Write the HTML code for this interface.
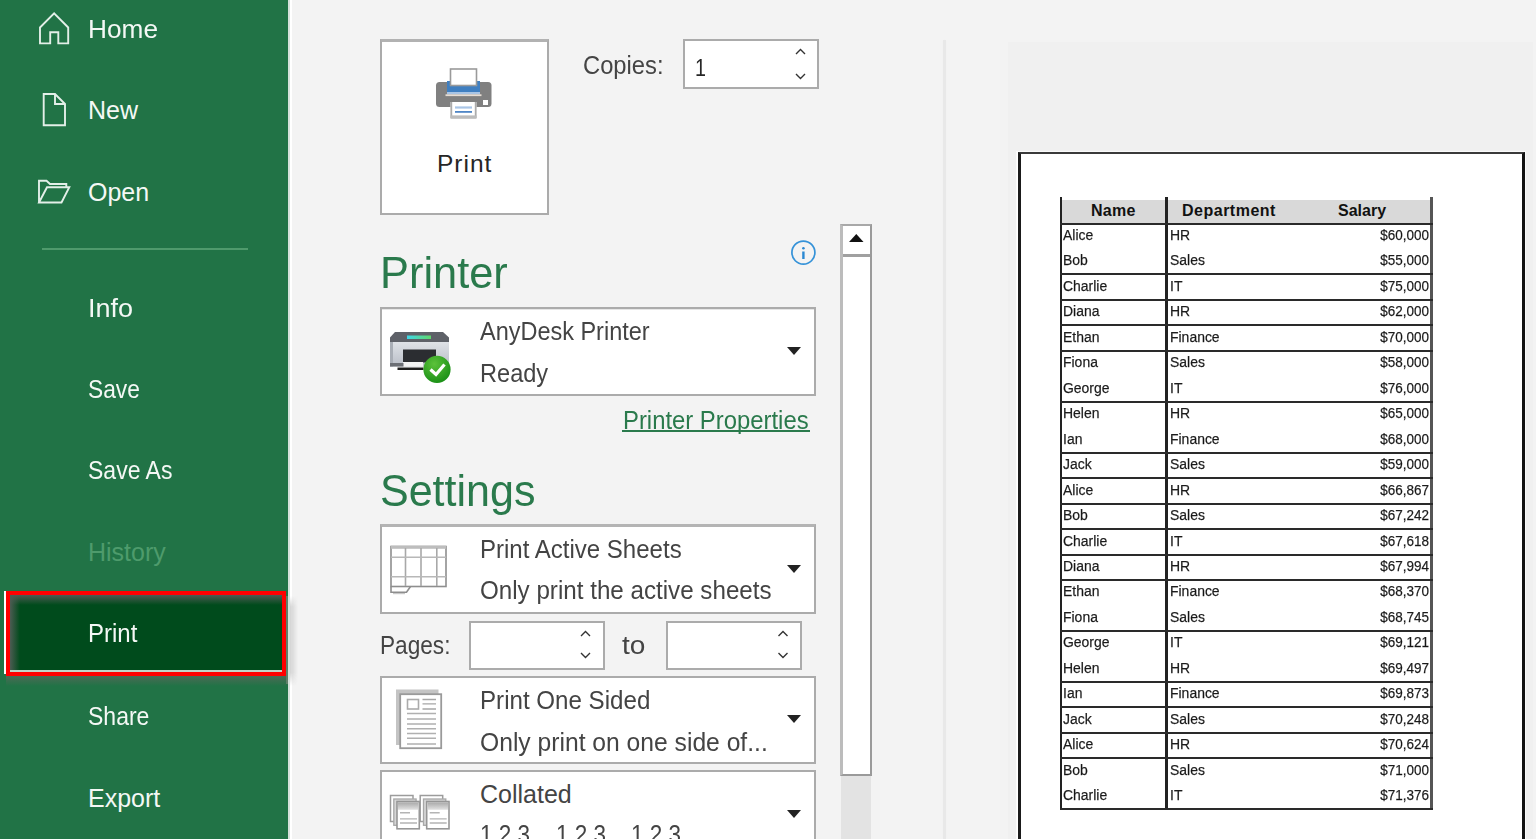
<!DOCTYPE html>
<html><head><meta charset="utf-8">
<style>
html,body{margin:0;padding:0;}
body{width:1536px;height:839px;overflow:hidden;position:relative;background:#f3f3f3;font-family:"Liberation Sans",sans-serif;}
.a{position:absolute;}
.t{position:absolute;white-space:nowrap;line-height:1;transform-origin:0 0;}
.si{color:#f4f8f5;font-size:25px;left:88px;}
.box{position:absolute;background:#fff;border:2px solid #ababab;box-sizing:border-box;}
.dd{color:#444;font-size:25px;}
.arr{position:absolute;width:0;height:0;border-left:7px solid transparent;border-right:7px solid transparent;border-top:8px solid #222;}
.head{color:#2a7a4c;font-size:45px;}
.pt{position:absolute;white-space:nowrap;line-height:1;font-family:"Liberation Sans",sans-serif;font-size:15.5px;color:#151515;-webkit-text-stroke:0.25px #333;transform:scaleX(0.9);transform-origin:0 0;}
.pr{transform-origin:100% 0;}
.ph{position:absolute;white-space:nowrap;line-height:1;font-weight:bold;font-size:16px;color:#111;}
svg{position:absolute;overflow:visible;}
</style></head>
<body>
<div class="a" style="left:0;top:0;width:288px;height:839px;background:#217346"></div>
<div class="t si" style="top:17px;transform:scaleX(1.05)">Home</div>
<div class="t si" style="top:98px">New</div>
<div class="t si" style="top:180px">Open</div>
<div class="a" style="left:42px;top:248px;width:206px;height:2px;background:#4f9a6c"></div>
<div class="t si" style="top:296px;transform:scaleX(1.08)">Info</div>
<div class="t si" style="top:377px;transform:scaleX(0.91)">Save</div>
<div class="t si" style="top:458px;transform:scaleX(0.92)">Save As</div>
<div class="t si" style="top:540px;color:#4e9b6c">History</div>
<div class="t si" style="top:704px;transform:scaleX(0.92)">Share</div>
<div class="t si" style="top:786px">Export</div>
<!-- sidebar icons -->
<svg style="left:0;top:0" width="288" height="260" fill="none" stroke="#e3efe8" stroke-width="1.9" stroke-linejoin="miter">
  <path d="M40,27.5 L54.1,13.3 L68.2,27.5 V43.4 H58.3 V32.2 H50.2 V43.4 H40 Z"/>
  <path d="M43.7,94 H55 L65,104 V125.3 H43.7 Z M55,94 V104 H65"/>
  <path d="M39,202.5 V180.8 H46.5 L50,184 H66.3 V187.2 M39,202.5 L47,187.2 H69.3 L61.5,202.5 Z"/>
</svg>
<!-- selected print -->
<div class="a" style="left:6px;top:676px;width:282px;height:10px;background:linear-gradient(#4c6a55,#217346)"></div>
<div class="a" style="left:6px;top:591px;width:280px;height:85px;background:#ff0000"></div>
<div class="a" style="left:10px;top:595px;width:272px;height:77px;background:#004b1c"></div>
<div class="a" style="left:10px;top:595px;width:272px;height:10px;background:linear-gradient(#4d5b52,#004b1c)"></div>
<div class="a" style="left:10px;top:595px;width:10px;height:76px;background:linear-gradient(90deg,#4d5b52,rgba(0,75,28,0))"></div>
<div class="a" style="left:10px;top:670px;width:272px;height:2px;background:#c2d3c7"></div>
<div class="a" style="left:4px;top:591px;width:2px;height:83px;background:#fff"></div>
<div class="a" style="left:286px;top:596px;width:2px;height:88px;background:#5f8069"></div>
<div class="t si" style="top:621px;transform:scaleX(0.96)">Print</div>
<div class="a" style="left:288px;top:0;width:2px;height:839px;background:#d6e1db"></div><div class="a" style="left:290px;top:0;width:2px;height:839px;background:#fff"></div><div class="a" style="left:290px;top:596px;width:8px;height:90px;background:linear-gradient(90deg,rgba(200,200,200,0.8),rgba(243,243,243,0));-webkit-mask-image:linear-gradient(rgba(0,0,0,0),#000 12%,#000 85%,rgba(0,0,0,0))"></div>
<!-- print button -->
<div class="box" style="left:380px;top:38.5px;width:169px;height:176.5px;border-top:3px solid #b2b2b2"></div>
<svg style="left:0;top:0" width="10" height="10">
  <rect x="436" y="82" width="55.5" height="25" rx="3.5" fill="#808080"/>
  <rect x="447" y="81" width="33" height="11" fill="#3f7fc1"/>
  <rect x="447" y="92" width="33" height="2.4" fill="#a8c4e4"/>
  <rect x="445.5" y="94.3" width="36" height="1.8" fill="#e6ddd4"/>
  <rect x="450.5" y="69" width="26" height="16.5" fill="#fff" stroke="#9a9a9a" stroke-width="1.6"/>
  <rect x="450.5" y="102" width="26" height="16.8" fill="#fff"/>
  <path d="M451.3,102 V118 M475.7,102 V118" stroke="#ababab" stroke-width="1.8"/>
  <rect x="450.5" y="115.4" width="26" height="3.4" fill="#bcbcbc"/>
  <rect x="455" y="106.4" width="17" height="2.2" fill="#a9c5e6"/>
  <rect x="455" y="111" width="17" height="1.8" fill="#4f86c6"/>
  <rect x="483" y="100" width="5" height="5" fill="#fff"/>
</svg>
<div class="t dd" style="left:437px;top:151.5px;font-size:24.5px;letter-spacing:1px;color:#262626">Print</div>

<div class="t dd" style="left:583px;top:53px;color:#444;transform:scaleX(0.95)">Copies:</div>
<div class="box" style="left:683px;top:39px;width:136px;height:50px"></div>
<div class="t dd" style="left:695px;top:55.5px;font-size:24px;color:#262626;transform:scaleX(0.82)">1</div>

<div class="a" style="left:943px;top:40px;width:3px;height:799px;background:#e8e8e8;box-shadow:0 0 1px #ececec"></div>
<div class="a" style="left:1008px;top:42px;width:525px;height:797px;background:#f0f0f0"></div>

<div class="t head" style="left:380px;top:250px;transform:scaleX(0.964)">Printer</div>
<div class="box" style="left:380px;top:307px;width:436px;height:89px;box-shadow:inset 0 1px 0 #e6e6e6"></div>
<div class="t dd" style="left:480px;top:319px;transform:scaleX(0.939)">AnyDesk Printer</div>
<div class="t dd" style="left:480px;top:360.5px;transform:scaleX(0.943)">Ready</div>
<div class="arr" style="left:787px;top:346.5px"></div>
<div class="t" style="left:623px;top:408px;font-size:25px;color:#2a7a4c;transform:scaleX(0.954)">Printer Properties</div><div class="a" style="left:622px;top:429.8px;width:188px;height:1.8px;background:#2a7a4c"></div>

<div class="t head" style="left:380px;top:468px;transform:scaleX(0.956)">Settings</div>
<div class="box" style="left:380px;top:524px;width:436px;height:90px;border-top:3px solid #b4b4b4"></div>
<div class="t dd" style="left:480px;top:537px;transform:scaleX(0.961)">Print Active Sheets</div>
<div class="t dd" style="left:480px;top:578px;transform:scaleX(0.967)">Only print the active sheets</div>
<div class="arr" style="left:787px;top:565px"></div>

<div class="t dd" style="left:380px;top:633px;transform:scaleX(0.905)">Pages:</div>
<div class="box" style="left:469px;top:621px;width:136px;height:49px"></div>
<div class="t dd" style="left:622px;top:633px;transform:scaleX(1.12)">to</div>
<div class="box" style="left:666px;top:621px;width:136px;height:49px"></div>

<div class="box" style="left:380px;top:676px;width:436px;height:88px"></div>
<div class="t dd" style="left:480px;top:688px;transform:scaleX(0.965)">Print One Sided</div>
<div class="t dd" style="left:480px;top:729.5px;transform:scaleX(0.986)">Only print on one side of...</div>
<div class="arr" style="left:787px;top:715px"></div>

<div class="box" style="left:380px;top:770px;width:436px;height:100px"></div>
<div class="t dd" style="left:480px;top:782px">Collated</div>
<div class="t dd" style="left:480px;top:822px;transform:scaleX(0.9)">1,2,3</div><div class="t dd" style="left:556px;top:822px;transform:scaleX(0.9)">1,2,3</div><div class="t dd" style="left:631px;top:822px;transform:scaleX(0.9)">1,2,3</div>
<div class="arr" style="left:787px;top:809.5px"></div>

<!-- spinner carets, info icon -->
<svg style="left:0;top:0" width="10" height="10" fill="none" stroke="#333" stroke-width="1.6">
  <path d="M796,54 L800.5,49.5 L805,54 M796,74 L800.5,78.5 L805,74" stroke-width="1.4"/>
  <path d="M581,636 L585.5,631.5 L590,636 M581,653 L585.5,657.5 L590,653" stroke-width="1.4"/>
  <path d="M778.5,636 L783,631.5 L787.5,636 M778.5,653 L783,657.5 L787.5,653" stroke-width="1.4"/>
  <circle cx="803.4" cy="252.6" r="11.5" stroke="#3592d8" stroke-width="1.7"/>
  <path d="M803.4,251.5 V259" stroke="#2a88d2" stroke-width="2.4"/>
  <circle cx="803.4" cy="248.2" r="1.3" fill="#2a88d2" stroke="none"/>
</svg>

<!-- scrollbar -->
<div class="a" style="left:841px;top:775px;width:30px;height:64px;background:#e3e3e3"></div>
<div class="a" style="left:840px;top:224px;width:32px;height:552px;background:#fff;border-left:3px solid #bcbcbc;border-top:2px solid #a8a8a8;border-right:2px solid #9a9a9a;border-bottom:2px solid #9a9a9a;box-sizing:border-box"></div>
<div class="a" style="left:843px;top:254px;width:27px;height:3px;background:#a0a0a0"></div>
<svg style="left:0;top:0" width="10" height="10"><path d="M849,242 L856.3,234 L863.5,242 Z" fill="#111"/></svg>

<!-- preview page -->
<div class="a" style="left:1016px;top:151px;width:510px;height:700px;background:#fff;border:1px solid #fafafa;box-sizing:border-box"></div><div class="a" style="left:1018px;top:152px;width:507px;height:700px;background:#fff;border-top:2px solid #3a3a3a;border-left:3px solid #1a1a1a;border-right:3px solid #111;box-sizing:border-box"></div>
<div class="a" style="left:1060px;top:200px;width:373px;height:23px;background:#d9d9d9"></div>
<div class="ph" style="left:1091px;top:203px;letter-spacing:0.3px">Name</div>
<div class="ph" style="left:1182px;top:203px;letter-spacing:0.5px">Department</div>
<div class="ph" style="left:1338px;top:203px;letter-spacing:0px">Salary</div>
<div class="a" style="left:1060px;top:197px;width:2px;height:612px;background:#222"></div>
<div class="a" style="left:1165px;top:197px;width:3px;height:612px;background:#222"></div>
<div class="a" style="left:1430px;top:197px;width:3px;height:612px;background:#555"></div>
<div class="a" style="left:1060px;top:222.5px;width:373px;height:2px;background:#2a2a2a"></div>
<!-- printer w check -->
<svg style="left:0;top:0" width="10" height="10">
  <defs>
    <linearGradient id="cy" x1="0" x2="1"><stop offset="0" stop-color="#3fd6e8"/><stop offset="1" stop-color="#5fd86a"/></linearGradient>
    <linearGradient id="bd" x1="0" y1="0" x2="0" y2="1"><stop offset="0" stop-color="#dfe2e7"/><stop offset="1" stop-color="#b9bec7"/></linearGradient>
    <radialGradient id="gc" cx="0.4" cy="0.3" r="0.8"><stop offset="0" stop-color="#5cc23a"/><stop offset="1" stop-color="#138a12"/></radialGradient>
  </defs>
  <path d="M395,332 H443 L449,337.5 V342 H390 V337.5 Z" fill="#5e6168"/>
  <rect x="407" y="335.5" width="24" height="3.5" fill="url(#cy)"/>
  <rect x="390" y="342" width="59" height="24.5" fill="url(#bd)"/>
  <rect x="390" y="342" width="3" height="24.5" fill="#a9aeb6"/>
  <rect x="403" y="349.5" width="33" height="13" fill="#2b2d31"/>
  <rect x="403" y="362" width="20" height="4.5" fill="#f3f3f3"/>
  <rect x="390" y="363" width="13.5" height="3.5" fill="#6c6f75"/>
  <rect x="397.5" y="367.5" width="26" height="2.5" fill="#1e1e1e"/>
  <circle cx="437" cy="369.4" r="13.6" fill="url(#gc)"/>
  <path d="M430.5,369.5 L436,374.5 L444.5,364.5" stroke="#fff" stroke-width="3.2" fill="none"/>
</svg>
<!-- sheets grid -->
<svg style="left:0;top:0" width="10" height="10" fill="none">
  <rect x="391" y="546.5" width="55" height="40" stroke="#8e8e8e" stroke-width="1.6"/>
  <rect x="391" y="545.8" width="55" height="3" fill="#bdbdbd"/>
  <path d="M405.5,548 V586 M421,548 V586 M436.8,548 V586" stroke="#a8a8a8" stroke-width="1.6"/>
  <path d="M391,557.3 H446 M391,576.7 H446" stroke="#b8b8b8" stroke-width="1.6"/>
  <path d="M391,586.5 V592.3 H406.5 L410.5,586.5" stroke="#8e8e8e" stroke-width="1.6"/>
  <path d="M393,593.6 H405" stroke="#c8c8c8" stroke-width="1.2"/>
</svg>
<!-- one sided -->
<svg style="left:0;top:0" width="10" height="10" fill="none">
  <rect x="396" y="689.5" width="42.5" height="55.5" fill="#c4c4c4"/>
  <rect x="400.2" y="694.2" width="41" height="54" fill="#fff" stroke="#9a9a9a" stroke-width="1.8"/>
  <rect x="407.5" y="699.5" width="11" height="9.5" stroke="#ababab" stroke-width="1.6"/>
  <path d="M422.5,699.5 H436 M422.5,703.8 H436 M422.5,709 H436" stroke="#a6a6a6" stroke-width="1.3"/>
  <path d="M407,713.5 H436 M407,719 H436 M407,724 H436 M407,728.7 H436 M407,733.5 H436 M407,738.3 H436 M407,744 H436" stroke="#b0b0b0" stroke-width="1.5"/>
</svg>
<!-- collated -->
<svg style="left:0;top:0" width="10" height="10" fill="none">
  <defs><linearGradient id="tb" x1="0" y1="0" x2="0" y2="1"><stop offset="0" stop-color="#a9a9a9"/><stop offset="1" stop-color="#e2e2e2"/></linearGradient></defs>
  <g id="stk">
  <rect x="390.5" y="795.5" width="22.5" height="26" fill="#fff" stroke="#9c9c9c" stroke-width="1.5"/>
  <rect x="393.8" y="799" width="22.3" height="26.3" fill="#d6d6d6" stroke="#a8a8a8" stroke-width="1.3"/>
  <rect x="397" y="801.5" width="22.3" height="27.3" fill="#fff" stroke="#969696" stroke-width="1.6"/>
  <rect x="398" y="802.3" width="20.3" height="7.5" fill="url(#tb)"/>
  <path d="M400,812.8 H410 M400,818.9 H417 M400,823 H417" stroke="#b4b4b4" stroke-width="1.4"/>
  </g>
  <use href="#stk" x="29.7" y="0"/>
</svg>
<div class="pt" style="top:227.0px;left:1062.5px">Alice</div>
<div class="pt" style="top:227.0px;left:1170px">HR</div>
<div class="pt pr" style="top:227.0px;right:107px;transform:scaleX(0.87)">$60,000</div>
<div class="pt" style="top:252.4px;left:1062.5px">Bob</div>
<div class="pt" style="top:252.4px;left:1170px">Sales</div>
<div class="pt pr" style="top:252.4px;right:107px;transform:scaleX(0.87)">$55,000</div>
<div class="pt" style="top:277.9px;left:1062.5px">Charlie</div>
<div class="pt" style="top:277.9px;left:1170px">IT</div>
<div class="pt pr" style="top:277.9px;right:107px;transform:scaleX(0.87)">$75,000</div>
<div class="pt" style="top:303.4px;left:1062.5px">Diana</div>
<div class="pt" style="top:303.4px;left:1170px">HR</div>
<div class="pt pr" style="top:303.4px;right:107px;transform:scaleX(0.87)">$62,000</div>
<div class="pt" style="top:328.8px;left:1062.5px">Ethan</div>
<div class="pt" style="top:328.8px;left:1170px">Finance</div>
<div class="pt pr" style="top:328.8px;right:107px;transform:scaleX(0.87)">$70,000</div>
<div class="pt" style="top:354.3px;left:1062.5px">Fiona</div>
<div class="pt" style="top:354.3px;left:1170px">Sales</div>
<div class="pt pr" style="top:354.3px;right:107px;transform:scaleX(0.87)">$58,000</div>
<div class="pt" style="top:379.7px;left:1062.5px">George</div>
<div class="pt" style="top:379.7px;left:1170px">IT</div>
<div class="pt pr" style="top:379.7px;right:107px;transform:scaleX(0.87)">$76,000</div>
<div class="pt" style="top:405.2px;left:1062.5px">Helen</div>
<div class="pt" style="top:405.2px;left:1170px">HR</div>
<div class="pt pr" style="top:405.2px;right:107px;transform:scaleX(0.87)">$65,000</div>
<div class="pt" style="top:430.7px;left:1062.5px">Ian</div>
<div class="pt" style="top:430.7px;left:1170px">Finance</div>
<div class="pt pr" style="top:430.7px;right:107px;transform:scaleX(0.87)">$68,000</div>
<div class="pt" style="top:456.1px;left:1062.5px">Jack</div>
<div class="pt" style="top:456.1px;left:1170px">Sales</div>
<div class="pt pr" style="top:456.1px;right:107px;transform:scaleX(0.87)">$59,000</div>
<div class="pt" style="top:481.6px;left:1062.5px">Alice</div>
<div class="pt" style="top:481.6px;left:1170px">HR</div>
<div class="pt pr" style="top:481.6px;right:107px;transform:scaleX(0.87)">$66,867</div>
<div class="pt" style="top:507.0px;left:1062.5px">Bob</div>
<div class="pt" style="top:507.0px;left:1170px">Sales</div>
<div class="pt pr" style="top:507.0px;right:107px;transform:scaleX(0.87)">$67,242</div>
<div class="pt" style="top:532.5px;left:1062.5px">Charlie</div>
<div class="pt" style="top:532.5px;left:1170px">IT</div>
<div class="pt pr" style="top:532.5px;right:107px;transform:scaleX(0.87)">$67,618</div>
<div class="pt" style="top:558.0px;left:1062.5px">Diana</div>
<div class="pt" style="top:558.0px;left:1170px">HR</div>
<div class="pt pr" style="top:558.0px;right:107px;transform:scaleX(0.87)">$67,994</div>
<div class="pt" style="top:583.4px;left:1062.5px">Ethan</div>
<div class="pt" style="top:583.4px;left:1170px">Finance</div>
<div class="pt pr" style="top:583.4px;right:107px;transform:scaleX(0.87)">$68,370</div>
<div class="pt" style="top:608.9px;left:1062.5px">Fiona</div>
<div class="pt" style="top:608.9px;left:1170px">Sales</div>
<div class="pt pr" style="top:608.9px;right:107px;transform:scaleX(0.87)">$68,745</div>
<div class="pt" style="top:634.3px;left:1062.5px">George</div>
<div class="pt" style="top:634.3px;left:1170px">IT</div>
<div class="pt pr" style="top:634.3px;right:107px;transform:scaleX(0.87)">$69,121</div>
<div class="pt" style="top:659.8px;left:1062.5px">Helen</div>
<div class="pt" style="top:659.8px;left:1170px">HR</div>
<div class="pt pr" style="top:659.8px;right:107px;transform:scaleX(0.87)">$69,497</div>
<div class="pt" style="top:685.3px;left:1062.5px">Ian</div>
<div class="pt" style="top:685.3px;left:1170px">Finance</div>
<div class="pt pr" style="top:685.3px;right:107px;transform:scaleX(0.87)">$69,873</div>
<div class="pt" style="top:710.7px;left:1062.5px">Jack</div>
<div class="pt" style="top:710.7px;left:1170px">Sales</div>
<div class="pt pr" style="top:710.7px;right:107px;transform:scaleX(0.87)">$70,248</div>
<div class="pt" style="top:736.2px;left:1062.5px">Alice</div>
<div class="pt" style="top:736.2px;left:1170px">HR</div>
<div class="pt pr" style="top:736.2px;right:107px;transform:scaleX(0.87)">$70,624</div>
<div class="pt" style="top:761.6px;left:1062.5px">Bob</div>
<div class="pt" style="top:761.6px;left:1170px">Sales</div>
<div class="pt pr" style="top:761.6px;right:107px;transform:scaleX(0.87)">$71,000</div>
<div class="pt" style="top:787.1px;left:1062.5px">Charlie</div>
<div class="pt" style="top:787.1px;left:1170px">IT</div>
<div class="pt pr" style="top:787.1px;right:107px;transform:scaleX(0.87)">$71,376</div>
<div class="a" style="left:1060px;top:273.4px;width:373px;height:2px;background:#2a2a2a"></div>
<div class="a" style="left:1060px;top:298.9px;width:373px;height:2px;background:#2a2a2a"></div>
<div class="a" style="left:1060px;top:324.3px;width:373px;height:2px;background:#2a2a2a"></div>
<div class="a" style="left:1060px;top:349.8px;width:373px;height:2px;background:#2a2a2a"></div>
<div class="a" style="left:1060px;top:400.7px;width:373px;height:2px;background:#2a2a2a"></div>
<div class="a" style="left:1060px;top:451.6px;width:373px;height:2px;background:#2a2a2a"></div>
<div class="a" style="left:1060px;top:477.1px;width:373px;height:2px;background:#2a2a2a"></div>
<div class="a" style="left:1060px;top:502.6px;width:373px;height:2px;background:#2a2a2a"></div>
<div class="a" style="left:1060px;top:528.0px;width:373px;height:2px;background:#2a2a2a"></div>
<div class="a" style="left:1060px;top:553.5px;width:373px;height:2px;background:#2a2a2a"></div>
<div class="a" style="left:1060px;top:578.9px;width:373px;height:2px;background:#2a2a2a"></div>
<div class="a" style="left:1060px;top:629.9px;width:373px;height:2px;background:#2a2a2a"></div>
<div class="a" style="left:1060px;top:680.8px;width:373px;height:2px;background:#2a2a2a"></div>
<div class="a" style="left:1060px;top:706.2px;width:373px;height:2px;background:#2a2a2a"></div>
<div class="a" style="left:1060px;top:731.7px;width:373px;height:2px;background:#2a2a2a"></div>
<div class="a" style="left:1060px;top:757.2px;width:373px;height:2px;background:#2a2a2a"></div>
<div class="a" style="left:1060px;top:808.1px;width:373px;height:2px;background:#2a2a2a"></div>
</body></html>
